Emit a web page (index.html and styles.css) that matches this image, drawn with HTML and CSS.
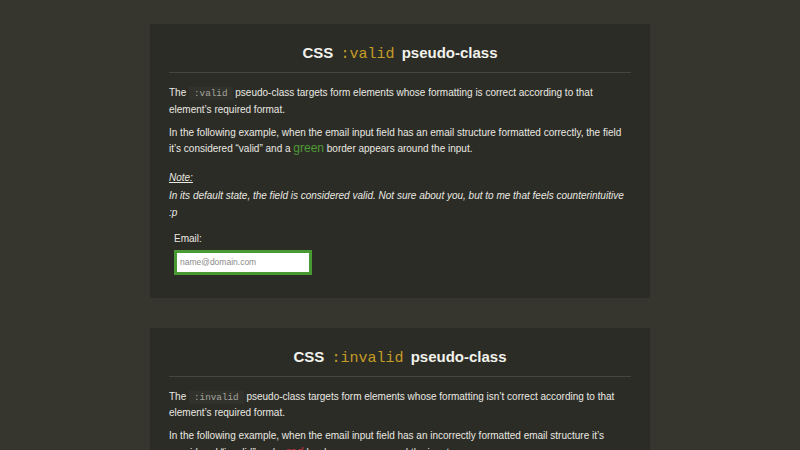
FILE: index.html
```html
<!DOCTYPE html>
<html lang="en">
<head>
<meta charset="utf-8">
<title>CSS :valid and :invalid</title>
<link rel="stylesheet" href="styles.css">
</head>
<body>
<main class="page">
  <section class="card">
    <h1 class="title">CSS <code class="title-code">:valid</code> pseudo-class</h1>
    <p class="text">The <code class="inline-code">:valid</code> pseudo-class targets form elements whose formatting is correct according to that element’s required format.</p>
    <p class="text">In the following example, when the email input field has an email structure formatted correctly, the field it’s considered “valid” and a <span class="green">green</span> border appears around the input.</p>
    <div class="note">
      <p class="note-label">Note:</p>
      <p class="note-text">In its default state, the field is considered valid. Not sure about you, but to me that feels counterintuitive :p</p>
    </div>
    <form class="form">
      <label class="label" for="email1">Email:</label>
      <input class="field field-valid" id="email1" type="email" placeholder="name@domain.com">
    </form>
  </section>
  <section class="card">
    <h1 class="title">CSS <code class="title-code">:invalid</code> pseudo-class</h1>
    <p class="text">The <code class="inline-code">:invalid</code> pseudo-class targets form elements whose formatting isn’t correct according to that element’s required format.</p>
    <p class="text">In the following example, when the email input field has an incorrectly formatted email structure it’s considered “invalid” and a <span class="red">red</span> border appears around the input.</p>
  </section>
</main>
</body>
</html>
```
FILE: styles.css
```css
html, body {
  margin: 0;
  padding: 0;
}
body {
  background: #36362f;
  color: #e9e9e1;
  font-family: "Liberation Sans", Arial, sans-serif;
  font-size: 10px;
}
.page {
  width: 500px;
  margin: 0 auto;
  padding-top: 24px;
  display: flex;
  flex-direction: column;
  gap: 30px;
}
.card {
  background: #2c2c27;
  padding: 20px 19px 23px;
}
.title {
  margin: 0;
  font-size: 15px;
  line-height: 18px;
  font-weight: bold;
  text-align: center;
  color: #f2f2ec;
  padding-bottom: 10px;
  border-bottom: 1px solid #46463f;
}
.title-code {
  font-family: "Liberation Mono", "Courier New", monospace;
  font-weight: normal;
  color: #c49c26;
  font-size: 15px;
  line-height: 1;
  padding: 0 3px;
}
.text {
  margin: 12px 0 0;
  line-height: 16.5px;
}
.text + .text {
  margin-top: 6.5px;
}
.inline-code {
  font-family: "Liberation Mono", "Courier New", monospace;
  font-size: 9.3px;
  line-height: 1;
  color: #a4a49c;
  background: #32322d;
  padding: 1px 5px;
}
.green {
  color: #4e9a34;
  font-size: 12px;
  line-height: 1;
}
.red {
  color: #c0303a;
  font-size: 12px;
  line-height: 1;
}
.note {
  margin-top: 12.5px;
  font-style: italic;
  line-height: 16.5px;
}
.note-label {
  margin: 0 0 1.5px;
  text-decoration: underline;
}
.note-text {
  margin: 0;
}
.form {
  margin: 10px 0 0 5px;
  display: flex;
  flex-direction: column;
  align-items: flex-start;
  gap: 2px;
}
.label {
  font-size: 10px;
  line-height: 16.5px;
}
.field {
  box-sizing: border-box;
  width: 138px;
  height: 25px;
  padding: 0 3px;
  font-family: "Liberation Sans", Arial, sans-serif;
  font-size: 8.5px;
  background: #fff;
  color: #333;
  outline: none;
}
.field::placeholder {
  color: #8a8a8a;
}
.field-valid {
  border: 3px solid #4a9a34;
}
```
